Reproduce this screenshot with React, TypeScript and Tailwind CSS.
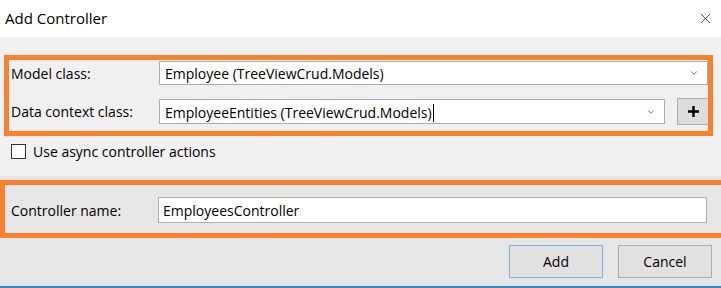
import { ChevronDown, X } from "lucide-react";

const font = { fontFamily: '"Open Sans", "Noto Sans", Arial, sans-serif' };

function Select({ value, caret, className }: { value: string; caret?: boolean; className: string }) {
  return (
    <div className={`flex items-center border border-[#abadb3] bg-white pl-[5px] pr-[8px] ${className}`}>
      <span className="flex-1 truncate text-[14px] text-black">
        {value}
        {caret && <span className="ml-[1px] inline-block h-[18px] w-[1px] translate-y-[4px] bg-black" />}
      </span>
      <ChevronDown className="h-[10px] w-[10px] text-[#606060]" strokeWidth={2.2} />
    </div>
  );
}

export default function App() {
  return (
    <div style={font} className="flex h-[288px] w-[721px] flex-col overflow-hidden bg-[#f0f0f0] text-black">
      <div className="flex h-[37px] items-center justify-between bg-white pl-[5px] pr-[7px]">
        <span className="text-[15px]">Add Controller</span>
        <X className="h-[17px] w-[17px] text-[#222]" strokeWidth={1.1} />
      </div>

      <div className="flex h-[139px] flex-col pt-[18px]">
        <div className="ml-[4px] mr-[8px] flex flex-col gap-[13px] border-[5px] border-[#f7812d] pb-[6px] pl-[2px] pt-[1px]">
          <div className="flex items-center">
            <span className="w-[148px] text-[14px]">Model class:</span>
            <Select value="Employee (TreeViewCrud.Models)" className="h-[24px] flex-1" />
          </div>
          <div className="flex items-center">
            <span className="w-[148px] text-[14px]">Data context class:</span>
            <Select value="EmployeeEntities (TreeViewCrud.Models)" caret className="h-[25px] flex-1" />
            <button className="ml-[12px] flex h-[27px] w-[31px] items-center justify-center border border-r-0 border-[#adadad] bg-[#dcdcdc]">
              <svg width="13" height="13" viewBox="0 0 13 13">
                <path d="M6.5 1v11M1 6.5h11" stroke="#000" strokeWidth="2.4" />
              </svg>
            </button>
          </div>
        </div>
        <label className="ml-[11px] mt-[5px] flex items-center gap-[7px] text-[14px]">
          <span className="h-[15px] w-[15px] border border-[#333] bg-white" />
          Use async controller actions
        </label>
      </div>

      <div className="flex flex-1 flex-col bg-[#e6e6e6] pt-[4px]">
        <div className="-mr-[10px] flex items-center border-[5px] border-[#f7812d] pb-[10px] pl-[6px] pr-[19px] pt-[12px]">
          <span className="w-[147px] text-[14px]">Controller name:</span>
          <div className="flex h-[26px] flex-1 items-center border border-[#abadb3] bg-white pl-[4px] text-[14px]">
            EmployeesController
          </div>
        </div>
        <div className="mt-[7px] flex justify-end gap-[15px] pr-[9px]">
          <button className="h-[33px] w-[94px] border border-[#7eb4ea] bg-[#e1e1e1] text-[14px]">Add</button>
          <button className="h-[33px] w-[94px] border border-[#adadad] bg-[#e1e1e1] text-[14px]">Cancel</button>
        </div>
        <div className="mt-auto h-[2px] bg-[#3a87c5]" />
      </div>
    </div>
  );
}
